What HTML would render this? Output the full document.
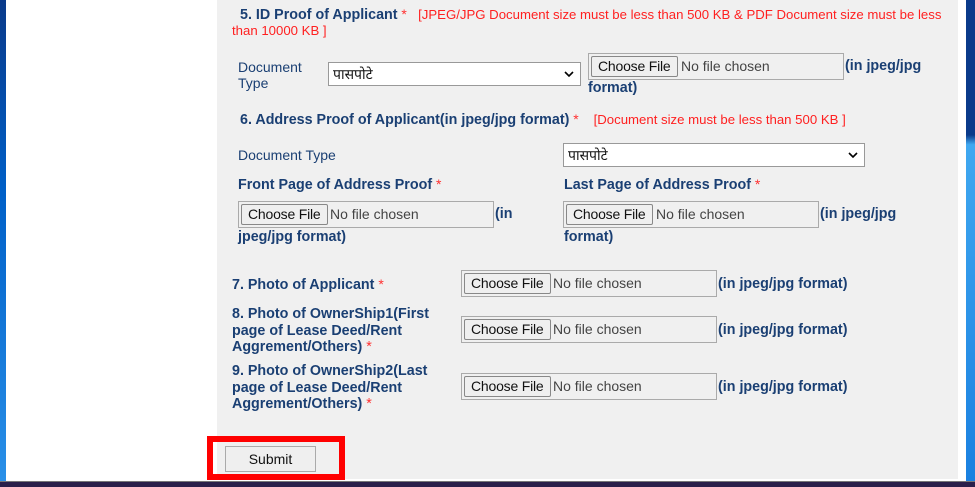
<!DOCTYPE html>
<html><head><meta charset="utf-8"><style>
*{margin:0;padding:0;box-sizing:border-box}
body{width:975px;height:487px;overflow:hidden;background:#fff;position:relative;font-family:"Liberation Sans",Verdana,sans-serif;font-size:14px}
.a{position:absolute;white-space:nowrap}
.b{color:#1a3f73;font-weight:bold;font-size:14.3px}
.n{color:#1a3f73;font-size:14px}
.r{color:#ff2020;font-size:13.2px}
.s{color:#ff3030}
.f{position:absolute;height:27px;border:1px solid #aaa;background:#f0f0f0;font-size:14px;color:#333}
.f span.btn{position:absolute;left:2px;top:2px;height:21px;border:1px solid #888;background:#efefef;border-radius:2px;padding:1px 6px;color:#111;letter-spacing:-0.2px}
.f span.t{position:absolute;top:4px;color:#444}
.sel{position:absolute;height:24px;border:1px solid #999;background:#fff;font-family:"Liberation Sans","Noto Sans CJK SC",sans-serif;font-size:14px;padding:2px 4px;color:#111}
.sel svg{position:absolute;right:6px;top:8px}
</style></head><body>
<div class="a" style="left:0;top:0;width:6px;height:482px;background:linear-gradient(#0a3a8a,#0060c8 40%,#2a90e8)"></div>
<div class="a" style="left:966px;top:0;width:9px;height:482px;background:linear-gradient(#0a3a8a,#0a3a8a 28%,#40a8f0 30%,#1a80e0)"></div>
<div class="a" style="left:217px;top:0;width:741px;height:479px;background:#f0f0f0"></div>
<div class="a" style="left:0;top:481px;width:975px;height:1px;background:#777"></div>
<div class="a" style="left:0;top:482px;width:975px;height:5px;background:#2a1f4a"></div>

<div class="a" style="left:240px;top:6px"><span class="b">5. ID Proof of Applicant</span> <span class="s">*</span> <span class="r">&nbsp;&nbsp;[JPEG/JPG Document size must be less than 500 KB &amp; PDF Document size must be less</span></div>
<div class="a r" style="left:232px;top:23px">than 10000 KB ]</div>

<div class="a n" style="left:238px;top:59px;line-height:16px;white-space:normal;width:80px">Document Type</div>
<div class="sel" style="left:328px;top:62px;width:253px">पासपोटे<svg width="10" height="7" viewBox="0 0 10 7"><path d="M1 1l4 4 4-4" fill="none" stroke="#000" stroke-width="1.6"/></svg></div>
<div class="f" style="left:588px;top:53px;width:256px"><span class="btn">Choose File</span><span class="t" style="left:92px">No file chosen</span></div>
<div class="a b" style="left:845px;top:58px">(in jpeg/jpg</div>
<div class="a b" style="left:588px;top:80px">format)</div>

<div class="a" style="left:240px;top:111px"><span class="b">6. Address Proof of Applicant(in jpeg/jpg format)</span> <span class="s">*</span> <span class="r">&nbsp;&nbsp;&nbsp;[Document size must be less than 500 KB ]</span></div>

<div class="a n" style="left:238px;top:147px">Document Type</div>
<div class="sel" style="left:563px;top:143px;width:302px">पासपोटे<svg width="10" height="7" viewBox="0 0 10 7"><path d="M1 1l4 4 4-4" fill="none" stroke="#000" stroke-width="1.6"/></svg></div>
<div class="a" style="left:238px;top:176px"><span class="b">Front Page of Address Proof</span> <span class="s">*</span></div>
<div class="a" style="left:564px;top:176px"><span class="b">Last Page of Address Proof</span> <span class="s">*</span></div>

<div class="f" style="left:238px;top:201px;width:256px"><span class="btn">Choose File</span><span class="t" style="left:91px">No file chosen</span></div>
<div class="a b" style="left:495px;top:206px">(in</div>
<div class="a b" style="left:238px;top:229px">jpeg/jpg format)</div>
<div class="f" style="left:563px;top:201px;width:256px"><span class="btn">Choose File</span><span class="t" style="left:92px">No file chosen</span></div>
<div class="a b" style="left:820px;top:206px">(in jpeg/jpg</div>
<div class="a b" style="left:564px;top:229px">format)</div>

<div class="a" style="left:232px;top:276px"><span class="b">7. Photo of Applicant</span> <span class="s">*</span></div>
<div class="f" style="left:461px;top:270px;width:256px"><span class="btn">Choose File</span><span class="t" style="left:91px">No file chosen</span></div>
<div class="a b" style="left:718px;top:276px">(in jpeg/jpg format)</div>

<div class="a b" style="left:232px;top:306px;line-height:16.5px">8. Photo of OwnerShip1(First<br>page of Lease Deed/Rent<br>Aggrement/Others) <span class="s" style="font-weight:normal">*</span></div>
<div class="f" style="left:461px;top:316px;width:256px"><span class="btn">Choose File</span><span class="t" style="left:91px">No file chosen</span></div>
<div class="a b" style="left:718px;top:322px">(in jpeg/jpg format)</div>

<div class="a b" style="left:232px;top:363px;line-height:16.5px">9. Photo of OwnerShip2(Last<br>page of Lease Deed/Rent<br>Aggrement/Others) <span class="s" style="font-weight:normal">*</span></div>
<div class="f" style="left:461px;top:373px;width:256px"><span class="btn">Choose File</span><span class="t" style="left:91px">No file chosen</span></div>
<div class="a b" style="left:718px;top:379px">(in jpeg/jpg format)</div>

<div class="a" style="left:207px;top:436px;width:138px;height:44px;border:6px solid #ff0000"></div>
<div class="a" style="left:225px;top:446px;width:91px;height:26px;border:1px solid #aaa;background:#efefef;text-align:center;line-height:24px;font-size:14px;color:#111">Submit</div>
</body></html>
